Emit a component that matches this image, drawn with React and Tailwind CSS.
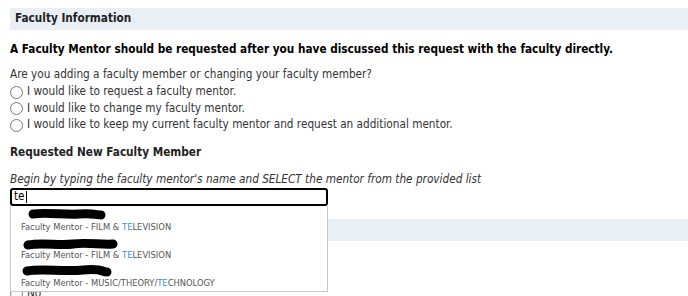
import React from "react";

const font = { fontFamily: '"DejaVu Sans Condensed", "DejaVu Sans", sans-serif' };

function Radio({ children }) {
  return (
    <label className="flex h-[16.5px] items-center gap-[4px]">
      <span className="box-border h-[13px] w-[13px] shrink-0 rounded-full border border-[#767676] bg-white" />
      <span>{children}</span>
    </label>
  );
}

function Scribble({ d, w }) {
  return (
    <svg width={w} height="16" viewBox={`0 0 ${w} 16`} className="block">
      <path d={d} fill="none" stroke="#000" strokeWidth="9" strokeLinecap="round" strokeLinejoin="round" />
    </svg>
  );
}

function Option({ name, prefix, after, mark = "TE" }) {
  return (
    <div className="h-[28px] px-[10px]">
      {name}
      <div className="-mt-[1px] text-[9.3px] leading-[12px] text-[#555]">
        Faculty Mentor - {prefix}
        <span className="text-[#3b8ee0]">{mark}</span>
        {after}
      </div>
    </div>
  );
}

export default function App() {
  return (
    <div className="h-[296px] overflow-hidden bg-white pl-[10px] pt-[8px] text-[11.7px] text-[#222]" style={font}>
      <div className="flex h-[22px] items-center bg-[#e8eff5] pl-[5px] font-bold text-[#222]">
        Faculty Information
      </div>

      <p className="mt-[11px] leading-[16px] font-bold text-black">
        A Faculty Mentor should be requested after you have discussed this request with the faculty directly.
      </p>

      <p className="mt-[9px] leading-[16px] text-[#333]">
        Are you adding a faculty member or changing your faculty member?
      </p>
      <div className="mt-[2px] text-[#333]">
        <Radio>I would like to request a faculty mentor.</Radio>
        <Radio>I would like to change my faculty mentor.</Radio>
        <Radio>I would like to keep my current faculty mentor and request an additional mentor.</Radio>
      </div>

      <p className="mt-[10px] leading-[16px] font-bold text-[#222]">Requested New Faculty Member</p>

      <p className="mt-[11px] leading-[16px] italic text-[#333]">
        Begin by typing the faculty mentor's name and SELECT the mentor from the provided list
      </p>

      <div className="relative mt-px w-[318px]">
        <div className="box-border flex h-[18px] items-center rounded-[3px] border-2 border-black pl-[2px] leading-none text-black">
          te<span className="ml-px h-[12px] w-px bg-black" />
        </div>

        <div className="absolute top-full left-0 z-10 box-border w-[318px] border border-t-0 border-[#c8c8c8] bg-white pb-[1px]">
          <Option
            name={<Scribble w={86} d="M12 8 C 24 6, 44 9, 58 8 S 76 9, 80 9" />}
            prefix="FILM & "
            after="LEVISION"
          />
          <Option
            name={<Scribble w={98} d="M7 11 C 22 8, 38 12, 52 10 S 80 11, 92 10" />}
            prefix="FILM & "
            after="LEVISION"
          />
          <Option
            name={<Scribble w={92} d="M6 9 C 20 6, 42 10, 62 8 S 80 10, 86 10" />}
            prefix="MUSIC/THEORY/"
            after="CHNOLOGY"
          />
        </div>
      </div>

      <div className="mt-[13px] h-[22px] bg-[#e8eff5]" />
      <div className="mt-[45px] text-[#333]">
        <Radio>No</Radio>
      </div>
    </div>
  );
}
